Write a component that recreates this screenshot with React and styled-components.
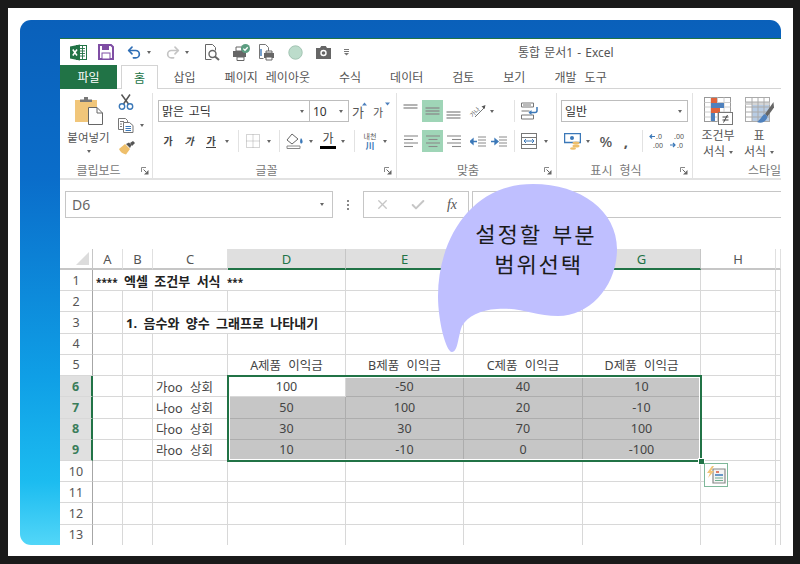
import React from 'react';
import styled, { createGlobalStyle } from 'styled-components';
import { Undo2, Redo2, X, Check } from 'lucide-react';

const KR = `"Noto Sans", "Noto Sans CJK KR", sans-serif`;
const GREEN = '#217346';

const Global = createGlobalStyle`
  html, body { margin: 0; padding: 0; background: #1a1a1a; }
  * { box-sizing: border-box; }
  body { font-family: ${KR}; word-spacing: 3px; }
`;

const Page = styled.div`
  width: 800px; height: 564px; overflow: hidden; background: #1a1a1a;
  padding: 8px 7px 8px 8px; display: flex;
`;
const Frame = styled.div`
  flex: 1; background: #fff; padding: 12px 12px 11px 12px; display: flex;
`;
const Panel = styled.div`
  flex: 1; padding: 18px 0 0 40px; display: flex; border-radius: 11px 11px 0 11px;
  background: linear-gradient(to bottom, #0a60ba 0%, #0a6dca 30%, #0f9fe6 68%, #1cbcf0 88%, #52d6f8 100%);
`;
const Window = styled.div`
  position: relative; flex: 1; background: #fff; border-top: 1px solid ${GREEN};
  display: flex; flex-direction: column; overflow: hidden; color: #444; font-size: 12px;
`;

/* quick access */
const Qat = styled.div`flex: none; height: 26px; display: flex; align-items: center;`;
const Title = styled.div`margin-left: 168px; color: #555; white-space: nowrap; font-size: 12px; word-spacing: 1px;`;
const Slot = styled.div`
  flex: none; width: ${p => p.$w}px; height: ${p => p.$h || 22}px; margin-left: ${p => p.$ml || 0}px;
  display: flex; align-items: center; justify-content: center;
  background: ${p => (p.$on ? '#9fd5b7' : 'transparent')};
`;
const CaretMark = styled.i`
  display: block; width: 0; height: 0; border-left: 2.5px solid transparent; border-right: 2.5px solid transparent;
  border-top: 3px solid #666;
`;
const Caret = ({ ml }) => <Slot $w={6} $ml={ml}><CaretMark /></Slot>;

/* tabs */
const Tabs = styled.div`flex: none; height: 24px; display: flex; border-bottom: 1px solid #d4d4d4;`;
const FileTab = styled.div`
  width: 57px; background: ${GREEN}; color: #fff; display: flex; align-items: center; justify-content: center;
  height: 24px;
`;
const HomeTab = styled.div`
  width: 37px; height: 24px; margin-left: 4px; margin-right: 1px; background: #fff; color: ${GREEN};
  border: 1px solid #d4d4d4; border-bottom: none; display: flex; align-items: center; justify-content: center;
`;
const Tab = styled.div`
  padding: 0 14.5px; height: 23px; display: flex; align-items: center; color: #555; white-space: nowrap;
  word-spacing: 5px;
`;

/* ribbon */
const Ribbon = styled.div`flex: none; height: 91px; display: flex; border-bottom: 2px solid #e2e2e2;`;
const Group = styled.div`
  flex: none; width: ${p => p.$w}px; margin-top: 4px; display: flex; flex-direction: column;
  border-right: ${p => (p.$last ? 'none' : '1px solid #e2e2e2')}; overflow: hidden;
`;
const GroupBody = styled.div`
  flex: 1; display: flex; padding-top: ${p => p.$pt || 0}px; flex-direction: ${p => p.$dir || 'row'};
  gap: ${p => p.$gap || 0}px;
`;
const ToolRow = styled.div`display: flex; height: 22px; align-items: center;`;
const Foot = styled.div`flex: none; height: 15px; display: flex; align-items: center; color: #777; font-size: 12px; word-spacing: 4px;`;
const FootLabel = styled.div`flex: 1; text-align: ${p => p.$align || 'center'}; white-space: nowrap; line-height: 15px;`;
const Launcher = styled.div`width: ${p => p.$w}px; display: flex; justify-content: center; flex: none;`;
const VSep = styled.div`flex: none; width: 1px; height: 22px; background: #e2e2e2; margin-left: ${p => p.$ml}px;`;
const Select = styled.div`
  flex: none; width: ${p => p.$w}px; height: 22px; margin-left: ${p => p.$ml || 0}px; border: 1px solid #bdbdbd;
  display: flex; align-items: center; justify-content: space-between; padding: 0 5px 0 3px; color: #333; font-size: 12px;
  word-spacing: 1.5px; background: #fff;
`;
const PasteCol = styled.div`
  width: 57px; display: flex; flex-direction: column; align-items: center; padding-top: 4px;
`;
const PasteLabel = styled.div`margin: 5px 0 4px; line-height: 16px; color: #555; white-space: nowrap; font-size: 11.5px;`;
const SmallCol = styled.div`display: flex; flex-direction: column; gap: 5px;`;
const SmallRow = styled.div`display: flex; height: 18px; align-items: center;`;
const StyleCol = styled.div`
  flex: none; width: ${p => p.$w}px; display: flex; flex-direction: column; align-items: center; padding-top: 4px;
`;
const StyleIcon = styled.div`height: 31px;`;
const StyleLine = styled.div`
  line-height: 16px; height: 16px; color: #555; white-space: nowrap; display: flex; align-items: center; gap: 4px;
  font-size: 12px;
`;
const Ga = styled.span`
  color: #444; font-size: ${p => p.$s || 10}px; font-weight: ${p => p.$b ? 700 : 400};
  font-style: ${p => p.$i ? 'italic' : 'normal'}; line-height: 12px;
  border-bottom: ${p => p.$u ? '1px solid #444' : 'none'};
`;
const FontColor = styled.div`display: flex; flex-direction: column; align-items: center; line-height: 12px; font-size: 12px; color: #444;`;
const ColorBar = styled.div`width: 16px; height: 3px; background: #000; margin-top: 1px;`;
const Stack = styled.div`display: flex; flex-direction: column; align-items: center; font-size: 7px; line-height: 8px; color: #555; word-spacing: 0;`;
const Stream = styled.span`color: #3b78b8; font-size: 9px; line-height: 9px; font-weight: 700;`;
const Percent = styled.span`font-size: 15px; color: #555; font-weight: 500;`;
const Comma = styled.span`font-size: 15px; color: #555; font-weight: 700; line-height: 12px;`;

/* formula bar */
const FormulaBar = styled.div`flex: none; height: 27px; margin-top: 11px; display: flex; padding-left: 5px;`;
const NameBox = styled.div`
  width: 268px; border: 1px solid #c6c6c6; display: flex; align-items: center; justify-content: space-between;
  padding: 0 8px 0 6px; color: #666; font-size: 14px;
`;
const Dots = styled.div`width: 30px; display: flex; flex-direction: column; align-items: center; justify-content: center; gap: 2px;`;
const Dot = styled.i`width: 2px; height: 2px; background: #888; display: block;`;
const FxBox = styled.div`width: 106px; border: 1px solid #c6c6c6; display: flex; align-items: center;`;
const FxMark = styled.span`font-family: "Liberation Serif", serif; font-style: italic; font-size: 14px; color: #555;`;
const FxInput = styled.div`flex: 1; margin-left: 3px; border: 1px solid #c6c6c6; border-right: none;`;

/* sheet */
const ROW_H = 21.23;
const Sheet = styled.div`
  flex: none; position: relative; margin-top: 31px; display: grid;
  grid-template-columns: 33px 30px 30px 75px 118px 118px 119px 118px 75px 5px;
  grid-template-rows: 21px repeat(13, ${ROW_H}px);
`;
const Corner = styled.div`
  display: flex; align-items: flex-end; justify-content: flex-end; padding: 0 3px 3px 0;
  border-right: 1px solid #c6c6c6; border-bottom: 2px solid #c6c6c6;
`;
const ColHead = styled.div`
  display: flex; align-items: center; justify-content: center; font-size: 13px;
  background: ${p => p.$sel ? '#dfdfdf' : '#fff'}; color: ${p => p.$sel ? GREEN : '#555'};
  border-right: 1px solid ${p => p.$sel ? '#c6c6c6' : '#e0e0e0'};
  border-bottom: 2px solid ${p => p.$sel ? GREEN : '#c6c6c6'};
`;
const RowHead = styled.div`
  display: flex; align-items: center; justify-content: center; font-size: 12.5px;
  background: ${p => p.$sel ? '#e0e0e0' : '#fff'}; color: ${p => p.$sel ? '#3a7d5a' : '#555'};
  font-weight: ${p => p.$sel ? 700 : 400};
  border-right: ${p => p.$sel ? `2px solid ${GREEN}` : '1px solid #a6a6a6'};
  border-bottom: 1px solid #d8d8d8;
`;
const Cell = styled.div`
  grid-column: span ${p => p.$span || 1};
  display: flex; align-items: center; white-space: nowrap; overflow: visible;
  justify-content: ${p => p.$center ? 'center' : 'flex-start'};
  padding-left: ${p => p.$center ? 0 : 3}px; color: ${p => p.$bold ? '#222' : '#444'};
  font-weight: ${p => p.$bold ? 700 : 400}; font-size: ${p => p.$bold ? 13 : 12.5}px;
  word-spacing: ${p => p.$bold ? 3 : 4}px;
  background: ${p => p.$gray ? '#c6c6c6' : 'transparent'};
  border-right: 1px solid ${p => p.$gray ? '#adadad' : '#d8d8d8'};
  border-bottom: 1px solid ${p => p.$gray ? '#adadad' : '#d8d8d8'};
`;
const Star = styled.span`font-size: 10px; word-spacing: 0;`;
const Selection = styled.div`
  position: absolute; left: 167px; top: ${21 + 5 * ROW_H - 1}px; width: 475px; height: ${4 * ROW_H + 2}px;
  pointer-events: none; border: 2px solid ${GREEN}; box-shadow: inset 0 0 0 1px #fff;
`;
const Handle = styled.i`
  position: absolute; right: -5px; bottom: -5px; width: 7px; height: 7px; background: ${GREEN};
  border: 1px solid #fff; display: block;
`;
const Quick = styled.div`
  position: absolute; left: calc(100% + 4px); top: calc(100% + 3px); width: 24px; height: 24px;
  border: 1px solid #7fb89a; background: #fff; display: flex; align-items: center; justify-content: center;
`;

/* bubble */
const Bubble = styled.div`
  position: absolute; left: 378px; top: 144px; width: 180px; height: 170px; display: grid;
`;
const BubbleShape = styled.svg`grid-area: 1 / 1; width: 180px; height: 170px; display: block;`;
const BubbleText = styled.div`
  grid-area: 1 / 1; align-self: start; padding: 35px 0 0 16px; text-align: center;
  color: #1a1a1a; font-family: "Noto Sans CJK KR", sans-serif; font-size: 22px; line-height: 30px; font-weight: 400;
  letter-spacing: 2px; word-spacing: 3px; transform: rotate(0.5deg);
`;
const BubbleLine = styled.div`padding-left: ${p => p.$pl || 0}px;`;

/* icons */
const ExcelLogo = () => (
  <svg width="17" height="17" viewBox="0 0 17 17">
    <rect x="6.5" y="1.5" width="10" height="14" fill="#fff" stroke="#217346" />
    <path d="M10 4.5h5M10 7h5M10 9.5h5M10 12h5M12.5 2v13" stroke="#217346" strokeWidth=".9" />
    <path d="M0 2.5 10 .5v16l-10-2z" fill="#217346" />
    <path d="M2.8 5.5 7 11.5M7 5.5 2.8 11.5" stroke="#fff" strokeWidth="1.5" />
  </svg>
);
const SaveIcon = () => (
  <svg width="16" height="16" viewBox="0 0 16 16">
    <path d="M1 1h12l2 2v12H1z" fill="#fff" stroke="#7f4ea4" strokeWidth="2" />
    <rect x="4" y="1.5" width="7" height="4.5" fill="#7f4ea4" />
    <rect x="4" y="9" width="8" height="6" fill="#fff" stroke="#7f4ea4" />
  </svg>
);
const PreviewIcon = () => (
  <svg width="17" height="17" viewBox="0 0 17 17" fill="none" stroke="#666">
    <path d="M2.5 15.5v-15h7l3 3v3" />
    <path d="M2.5 15.5h6" />
    <circle cx="9.5" cy="10" r="3.5" strokeWidth="1.4" />
    <path d="M12 12.5 16 16" strokeWidth="2" />
  </svg>
);
const PrintCheckIcon = () => (
  <svg width="18" height="17" viewBox="0 0 18 17">
    <path d="M0 7h13v6H0z" fill="#666" />
    <path d="M4 13h7v3.5H4z" fill="#fff" stroke="#666" />
    <path d="M3 7V3h6v4z" fill="#fff" stroke="#666" />
    <circle cx="12.5" cy="4.5" r="4.5" fill="#5b9d80" />
    <path d="m10.3 4.6 1.7 1.7 2.7-3" stroke="#fff" strokeWidth="1.3" fill="none" />
  </svg>
);
const PrintPreviewIcon = () => (
  <svg width="17" height="17" viewBox="0 0 17 17">
    <path d="M1.5 14.5V.5h6l3 3V8" fill="#fff" stroke="#777" />
    <path d="M1.5 14.5h4" stroke="#777" />
    <path d="M3 5v7" stroke="#3b78b8" strokeWidth="1.4" />
    <path d="M6 9h10v5H6z" fill="#666" />
    <path d="M8 7h6v2H8zM8 13h6v3H8z" fill="#fff" stroke="#666" />
  </svg>
);
const CircleMark = () => (
  <svg width="15" height="15" viewBox="0 0 15 15">
    <circle cx="7.5" cy="7.5" r="6.7" fill="#bcdccb" stroke="#a3c4b3" />
  </svg>
);
const CameraIcon = () => (
  <svg width="17" height="15" viewBox="0 0 17 15">
    <path d="M1 3h4l1.200-2h4.600L12 3h4v11H1z" fill="#666" />
    <circle cx="8.500" cy="8" r="3.200" fill="#fff" />
    <circle cx="8.500" cy="8" r="1.800" fill="#666" />
  </svg>
);
const MoreIcon = () => (
  <svg width="7" height="8" viewBox="0 0 7 8">
    <path d="M1 1.500h5M1 3.500h5" stroke="#777" />
    <path d="M1 5h5L3.500 7.500z" fill="#777" />
  </svg>
);
const PasteIcon = () => (
  <svg width="28" height="28" viewBox="0 0 28 28">
    <path d="M0 3h22v22H0z" fill="#f1c67a" />
    <path d="M5 5V2.500h4V0h4v2.500h4V5z" fill="#777" />
    <path d="M13.500 10.500h8.500l5.500 5.500v11.500h-14z" fill="#fff" stroke="#666" />
    <path d="M22 10.500V16h5.500" fill="none" stroke="#666" />
  </svg>
);
const CutIcon = () => (
  <svg width="16" height="16" viewBox="0 0 16 16" fill="none">
    <path d="M3.500 0.500 10.500 10M12 0.500 5.500 10" stroke="#555" strokeWidth="1.500" />
    <circle cx="4" cy="12.500" r="2.700" stroke="#3b78b8" strokeWidth="1.400" />
    <circle cx="12" cy="12.500" r="2.700" stroke="#3b78b8" strokeWidth="1.400" />
  </svg>
);
const CopyIcon = () => (
  <svg width="16" height="15" viewBox="0 0 16 15">
    <path d="M.5.500h7l2 2v9h-9z" fill="#fff" stroke="#777" />
    <path d="M5.500 4.500h6l3.500 3v7h-9.500z" fill="#fff" stroke="#777" />
    <path d="M2 3.500h4M2 6h2M2 8.500h2" stroke="#777" />
    <path d="M7.500 8.500h5.500M7.500 10.500h5.500M7.500 12.500h5.500" stroke="#3b78b8" />
  </svg>
);
const BrushIcon = () => (
  <svg width="16" height="14" viewBox="0 0 16 14">
    <path d="M0 8 6 3l5 5-4 5.500C4 13 1 11 0 8z" fill="#eebf6b" />
    <path d="m7 3 3-1.500 2.500 2.500L11 7z" fill="#555" />
    <path d="m11 2 3-2 2 2-3 3z" fill="#555" />
  </svg>
);
const Launch = () => (
  <svg width="8" height="8" viewBox="0 0 8 8" fill="none">
    <path d="M.5 5V.5H5" stroke="#888" />
    <path d="M2.500 2.500 5 5" stroke="#666" />
    <path d="M7.500 3v4.500H3z" fill="#666" />
  </svg>
);
const SizeGa = ({ up }) => (
  <svg width="18" height="18" viewBox="0 0 18 18">
    <text x="0" y="15" fontSize={up ? 13 : 11} fill="#555" fontFamily="Noto Sans CJK KR">가</text>
    <path d={up ? 'M10 3.500 12.500 .5 15 3.500z' : 'M12 .5h5L14.500 3.500z'} fill="#4f81bd" />
  </svg>
);
const BorderIcon = () => (
  <svg width="14" height="14" viewBox="0 0 14 14" fill="none" stroke="#aaa" strokeDasharray="1 1">
    <path d="M.5.500h13v13H.500zM7 .5v13M.5 7h13" />
  </svg>
);
const FillIcon = () => (
  <svg width="18" height="16" viewBox="0 0 18 16">
    <path d="M6 1 1 7l5 4 6-5z" fill="#fff" stroke="#666" />
    <path d="M15 5c2 2.500 2 5 .5 5.500S13.500 8 15 5z" fill="#3b78b8" />
    <path d="M1 13h13v2.500H1z" fill="#fff" stroke="#888" />
  </svg>
);
const VLines = ({ pos }) => {
  const y = pos === 'top' ? [1, 4] : pos === 'mid' ? [4, 7, 10] : [8, 11, 14];
  return (
    <svg width="15" height="15" viewBox="0 0 15 15">
      {y.map(v => <path key={v} d={`M.5 ${v}h14`} stroke="#8a8a8a" strokeWidth="1.300" />)}
    </svg>
  );
};
const HLines = ({ pos }) => {
  const x = w => (pos === 'left' ? 1 : pos === 'center' ? (16 - w) / 2 : 15 - w);
  return (
    <svg width="16" height="13" viewBox="0 0 16 13">
      {[1, 4.500, 8, 11.500].map((v, i) => {
        const w = i % 2 ? 9 : 14;
        return <path key={v} d={`M${x(w)} ${v}h${w}`} stroke="#8a8a8a" strokeWidth="1.100" />;
      })}
    </svg>
  );
};
const OrientIcon = () => (
  <svg width="20" height="18" viewBox="0 0 20 18">
    <text x="1" y="13" fontSize="6" fill="#555" transform="rotate(-45 6 10)" fontFamily="Noto Sans CJK KR">가나</text>
    <path d="M7 15 17 5" stroke="#777" />
    <path d="m13.500 4.500 4-1.500-1 4z" fill="#555" />
  </svg>
);
const WrapIcon = () => (
  <svg width="18" height="18" viewBox="0 0 18 18" fill="none">
    <path d="M.5 1h12v4H.5zM.5 9h8M.5 13h12v4H.5z" stroke="#777" />
    <path d="M2 3h8" stroke="#777" />
    <path d="M16 5v3.500q0 2-2 2H8" stroke="#3b78b8" strokeWidth="1.500" />
    <path d="m10.500 8-3 2.500 3 2.500z" fill="#3b78b8" />
  </svg>
);
const OutdentIcon = ({ rev }) => (
  <svg width="17" height="11" viewBox="0 0 17 11" fill="none">
    <path d="M8 1h8M8 4h8M8 7h8M8 10h8" stroke="#8a8a8a" />
    {rev ? <path d="M0 5.500h4M4 3l3 2.500L4 8z" stroke="#3b78b8" strokeWidth="1.300" fill="#3b78b8" />
      : <path d="M7 5.500H3M3 3 0 5.500 3 8z" stroke="#3b78b8" strokeWidth="1.300" fill="#3b78b8" />}
  </svg>
);
const MergeIcon = () => (
  <svg width="16" height="16" viewBox="0 0 16 16" fill="none">
    <rect x=".5" y=".5" width="15" height="15" stroke="#777" />
    <path d="M.5 4.500h15M.5 11.500h15" stroke="#777" />
    <path d="M3 8h10M5 6 3 8l2 2M11 6l2 2-2 2" stroke="#3b78b8" />
  </svg>
);
const AcctIcon = () => (
  <svg width="17" height="17" viewBox="0 0 17 17">
    <rect x=".5" y=".5" width="16" height="9" fill="#fff" stroke="#3b78b8" strokeWidth="1.500" />
    <circle cx="8" cy="5" r="2" fill="#3b78b8" />
    <ellipse cx="12" cy="10" rx="3.500" ry="1.500" fill="#eebf6b" />
    <ellipse cx="12" cy="13" rx="3.500" ry="1.500" fill="#eebf6b" />
    <ellipse cx="9" cy="15.500" rx="3" ry="1.300" fill="#eebf6b" />
  </svg>
);
const DecIcon = ({ more }) => (
  <svg width="17" height="16" viewBox="0 0 17 16">
    <text x={more ? 8 : 5} y="6" fontSize="7" fill="#555" fontFamily="Noto Sans">{more ? '.0' : '.00'}</text>
    <text x={more ? 5 : 8} y="15" fontSize="7" fill="#555" fontFamily="Noto Sans">{more ? '.00' : '.0'}</text>
    {more ? <path d="M7 3.500H2M4 1.500l-2 2 2 2" stroke="#3b78b8" strokeWidth="1.200" fill="none" />
      : <path d="M1 12h5M4 10l2 2-2 2" stroke="#3b78b8" strokeWidth="1.200" fill="none" />}
  </svg>
);
const CondIcon = () => (
  <svg width="29" height="28" viewBox="0 0 29 28">
    <rect x=".5" y=".5" width="26" height="24" fill="#fff" stroke="#999" />
    <path d="M7 .5v24M13.500.5v24M20 .5v24M.5 5.500h26M.5 10h26M.5 15h26M.5 20h26" stroke="#ccc" />
    <path d="M7 1h6v5H7z" fill="#e0643c" />
    <path d="M7 6h13v5H7z" fill="#4f81bd" />
    <path d="M7 11h9v5H7z" fill="#e0643c" />
    <path d="M7 16h4v8H7z" fill="#4f81bd" />
    <rect x="14.500" y="15.500" width="14" height="12" fill="#fff" stroke="#777" />
    <path d="M18.500 20h6M18.500 23h6M23.500 18l-4 7.500" stroke="#444" />
  </svg>
);
const TableIcon = () => (
  <svg width="29" height="28" viewBox="0 0 29 28">
    <rect x=".5" y=".5" width="24" height="24" fill="#fff" stroke="#aaa" />
    <path d="M.5 5h24v3H.5z" fill="#d6d6d6" />
    <path d="M7 8h17v16H7z" fill="#b8cce4" />
    <path d="M7 .5v24M13 .5v24M19 .5v24M.5 5h24M.5 10h24M.5 15h24M.5 20h24" stroke="#aaa" />
    <path d="M28.500 5 20 17l2.500 2.500 6.500-9z" fill="#666" />
    <path d="M20 17c-3 1-3 4-8 8 5 2 10-1 10.500-5.500z" fill="#4f81bd" />
  </svg>
);
const CornerMark = () => (
  <svg width="13" height="13" viewBox="0 0 13 13"><path d="M13 0v13H0z" fill="#dcdcdc" /></svg>
);
const QuickIcon = () => (
  <svg width="19" height="18" viewBox="0 0 19 18">
    <path d="M6 3h12v14H6z" fill="#f4f4f4" stroke="#888" strokeWidth="1.200" />
    <path d="M9 6h3" stroke="#d9553a" strokeWidth="1.500" />
    <path d="M8 9h8" stroke="#3b78b8" strokeWidth="1.500" />
    <path d="M8 12h8M8 14.500h8" stroke="#6fae8f" strokeWidth="1.200" />
    <path d="M5 0 0 7h3L1 12l6-7H4l3-5z" fill="#f1c67a" />
  </svg>
);
const BubblePath = () => (
  <path d="M155 1C203 1 239 28 239 66 C239 103 212 133 180 133 C157 133 142 124 119 126 C102 127 90 133 84 143 C80 153 80 169 74 169 C68 169 60 138 60 113 C60 58 92 1 155 1Z" fill="#bfbfff" transform="translate(-60 0)" />
);

const colHeads = [['A'], ['B'], ['C'], ['D', 1], ['E', 1], ['F', 1], ['G', 1], ['H'], ['']];
const products = ['A제품 이익금', 'B제품 이익금', 'C제품 이익금', 'D제품 이익금'];
const rowData = {
  6: ['가oo 상회', [100, -50, 40, 10]],
  7: ['나oo 상회', [50, 100, 20, -10]],
  8: ['다oo 상회', [30, 30, 70, 100]],
  9: ['라oo 상회', [10, -10, 0, -100]],
};
const Blank = ({ n }) => Array.from({ length: n }, (_, i) => <Cell key={`b${i}`} />);

const SheetRow = ({ r }) => {
  const sel = r >= 6 && r <= 9;
  let body;
  if (r === 1) {
    body = <><Cell $span={4} $bold><span><Star>****</Star> 엑셀 조건부 서식 <Star>***</Star></span></Cell><Blank n={5} /></>;
  } else if (r === 3) {
    body = <><Cell /><Cell $span={3} $bold>1. 음수와 양수 그래프로 나타내기</Cell><Blank n={5} /></>;
  } else if (r === 5) {
    body = <><Blank n={3} />{products.map(p => <Cell key={p} $center>{p}</Cell>)}<Cell /><Cell /></>;
  } else if (sel) {
    const [name, vals] = rowData[r];
    body = (
      <>
        <Cell /><Cell /><Cell>{name}</Cell>
        {vals.map((v, i) => <Cell key={i} $center $gray={!(r === 6 && i === 0)}>{v}</Cell>)}
        <Cell /><Cell />
      </>
    );
  } else {
    body = <Blank n={9} />;
  }
  return <><RowHead $sel={sel}>{r}</RowHead>{body}</>;
};

export default function App() {
  return (
    <Page>
      <Global />
      <Frame>
        <Panel>
          <Window>
            <Qat>
              <Slot $w={17} $ml={10}><ExcelLogo /></Slot>
              <Slot $w={16} $ml={11}><SaveIcon /></Slot>
              <Slot $w={16} $ml={12}><Undo2 size={17} color="#2f6eb5" strokeWidth={2.5} /></Slot>
              <Caret ml={4} />
              <Slot $w={16} $ml={13}><Redo2 size={17} color="#c4c4c4" strokeWidth={2.5} /></Slot>
              <Caret ml={3} />
              <Slot $w={17} $ml={13}><PreviewIcon /></Slot>
              <Slot $w={18} $ml={13}><PrintCheckIcon /></Slot>
              <Slot $w={17} $ml={7}><PrintPreviewIcon /></Slot>
              <Slot $w={15} $ml={13}><CircleMark /></Slot>
              <Slot $w={17} $ml={12}><CameraIcon /></Slot>
              <Slot $w={8} $ml={10}><MoreIcon /></Slot>
              <Title>통합 문서1 - Excel</Title>
            </Qat>
            <Tabs>
              <FileTab>파일</FileTab>
              <HomeTab>홈</HomeTab>
              {['삽입', '페이지 레이아웃', '수식', '데이터', '검토', '보기', '개발 도구'].map(t => <Tab key={t}>{t}</Tab>)}
            </Tabs>
            <Ribbon>
              <Group $w={93}>
                <GroupBody>
                  <PasteCol>
                    <PasteIcon />
                    <PasteLabel>붙여넣기</PasteLabel>
                    <CaretMark />
                  </PasteCol>
                  <SmallCol>
                    <SmallRow><Slot $w={18}><CutIcon /></Slot></SmallRow>
                    <SmallRow><Slot $w={18}><CopyIcon /></Slot><Caret ml={4} /></SmallRow>
                    <SmallRow><Slot $w={18} $ml={1}><BrushIcon /></Slot></SmallRow>
                  </SmallCol>
                </GroupBody>
                <Foot><FootLabel>클립보드</FootLabel><Launcher $w={15}><Launch /></Launcher></Foot>
              </Group>
              <Group $w={244}>
                <GroupBody $dir="column" $pt={7} $gap={8}>
                  <ToolRow>
                    <Select $w={152} $ml={5}>맑은 고딕<CaretMark /></Select>
                    <Select $w={40} $ml={-1}>10<CaretMark /></Select>
                    <Slot $w={18} $ml={3}><SizeGa up /></Slot>
                    <Slot $w={18} $ml={3}><SizeGa /></Slot>
                  </ToolRow>
                  <ToolRow>
                    <Slot $w={18} $ml={6}><Ga $b>가</Ga></Slot>
                    <Slot $w={18} $ml={3}><Ga $b $i>가</Ga></Slot>
                    <Slot $w={18} $ml={4}><Ga $b $u>가</Ga></Slot>
                    <Caret ml={4} />
                    <VSep $ml={8} />
                    <Slot $w={16} $ml={6}><BorderIcon /></Slot>
                    <Caret ml={5} />
                    <VSep $ml={7} />
                    <Slot $w={18} $ml={6}><FillIcon /></Slot>
                    <Caret ml={4} />
                    <Slot $w={18} $ml={5}><FontColor>가<ColorBar /></FontColor></Slot>
                    <Caret ml={3} />
                    <VSep $ml={8} />
                    <Slot $w={18} $ml={6}><Stack>내천<Stream>川</Stream></Stack></Slot>
                    <Caret ml={3} />
                  </ToolRow>
                </GroupBody>
                <Foot><FootLabel>글꼴</FootLabel><Launcher $w={16}><Launch /></Launcher></Foot>
              </Group>
              <Group $w={160}>
                <GroupBody $dir="column" $pt={7} $gap={8}>
                  <ToolRow>
                    <Slot $w={15} $ml={6}><VLines pos="top" /></Slot>
                    <Slot $w={21} $ml={4} $on><VLines pos="mid" /></Slot>
                    <Slot $w={15} $ml={3}><VLines pos="bottom" /></Slot>
                    <Slot $w={20} $ml={7}><OrientIcon /></Slot>
                    <Caret ml={1} />
                    <VSep $ml={19} />
                    <Slot $w={20} $ml={5}><WrapIcon /></Slot>
                  </ToolRow>
                  <ToolRow>
                    <Slot $w={16} $ml={6}><HLines pos="left" /></Slot>
                    <Slot $w={21} $ml={3} $on><HLines pos="center" /></Slot>
                    <Slot $w={16} $ml={3}><HLines pos="right" /></Slot>
                    <Slot $w={18} $ml={7}><OutdentIcon /></Slot>
                    <Slot $w={18} $ml={3}><OutdentIcon rev /></Slot>
                    <VSep $ml={6} />
                    <Slot $w={20} $ml={4}><MergeIcon /></Slot>
                    <Caret ml={4} />
                  </ToolRow>
                </GroupBody>
                <Foot><FootLabel>맞춤</FootLabel><Launcher $w={17}><Launch /></Launcher></Foot>
              </Group>
              <Group $w={136}>
                <GroupBody $dir="column" $pt={7} $gap={8}>
                  <ToolRow><Select $w={127} $ml={4}>일반<CaretMark /></Select></ToolRow>
                  <ToolRow>
                    <Slot $w={20} $ml={5}><AcctIcon /></Slot>
                    <Caret ml={3} />
                    <Slot $w={20} $ml={5}><Percent>%</Percent></Slot>
                    <Slot $w={10} $ml={5}><Comma>,</Comma></Slot>
                    <VSep $ml={11} />
                    <Slot $w={20} $ml={3}><DecIcon more /></Slot>
                    <Slot $w={20} $ml={1}><DecIcon /></Slot>
                  </ToolRow>
                </GroupBody>
                <Foot><FootLabel>표시 형식</FootLabel><Launcher $w={17}><Launch /></Launcher></Foot>
              </Group>
              <Group $w={88} $last>
                <GroupBody>
                  <StyleCol $w={50}>
                    <StyleIcon><CondIcon /></StyleIcon>
                    <StyleLine>조건부</StyleLine>
                    <StyleLine>서식 <CaretMark /></StyleLine>
                  </StyleCol>
                  <StyleCol $w={32}>
                    <StyleIcon><TableIcon /></StyleIcon>
                    <StyleLine>표</StyleLine>
                    <StyleLine>서식 <CaretMark /></StyleLine>
                  </StyleCol>
                </GroupBody>
                <Foot><FootLabel $align="right">스타일</FootLabel></Foot>
              </Group>
            </Ribbon>
            <FormulaBar>
              <NameBox>D6<CaretMark /></NameBox>
              <Dots><Dot /><Dot /><Dot /></Dots>
              <FxBox>
                <Slot $w={20} $ml={8}><X size={15} color="#c6c6c6" strokeWidth={2.2} /></Slot>
                <Slot $w={20} $ml={16}><Check size={16} color="#c6c6c6" strokeWidth={3} /></Slot>
                <Slot $w={20} $ml={14}><FxMark>fx</FxMark></Slot>
              </FxBox>
              <FxInput />
            </FormulaBar>
            <Sheet>
              <Corner><CornerMark /></Corner>
              {colHeads.map(([c, s], i) => <ColHead key={i} $sel={!!s}>{c}</ColHead>)}
              {Array.from({ length: 13 }, (_, i) => <SheetRow key={i} r={i + 1} />)}
              <Selection>
                <Handle />
                <Quick><QuickIcon /></Quick>
              </Selection>
            </Sheet>
            <Bubble>
              <BubbleShape viewBox="0 0 180 170"><BubblePath /></BubbleShape>
              <BubbleText>
                <BubbleLine>설정할 부분</BubbleLine>
                <BubbleLine $pl={6}>범위선택</BubbleLine>
              </BubbleText>
            </Bubble>
          </Window>
        </Panel>
      </Frame>
    </Page>
  );
}
